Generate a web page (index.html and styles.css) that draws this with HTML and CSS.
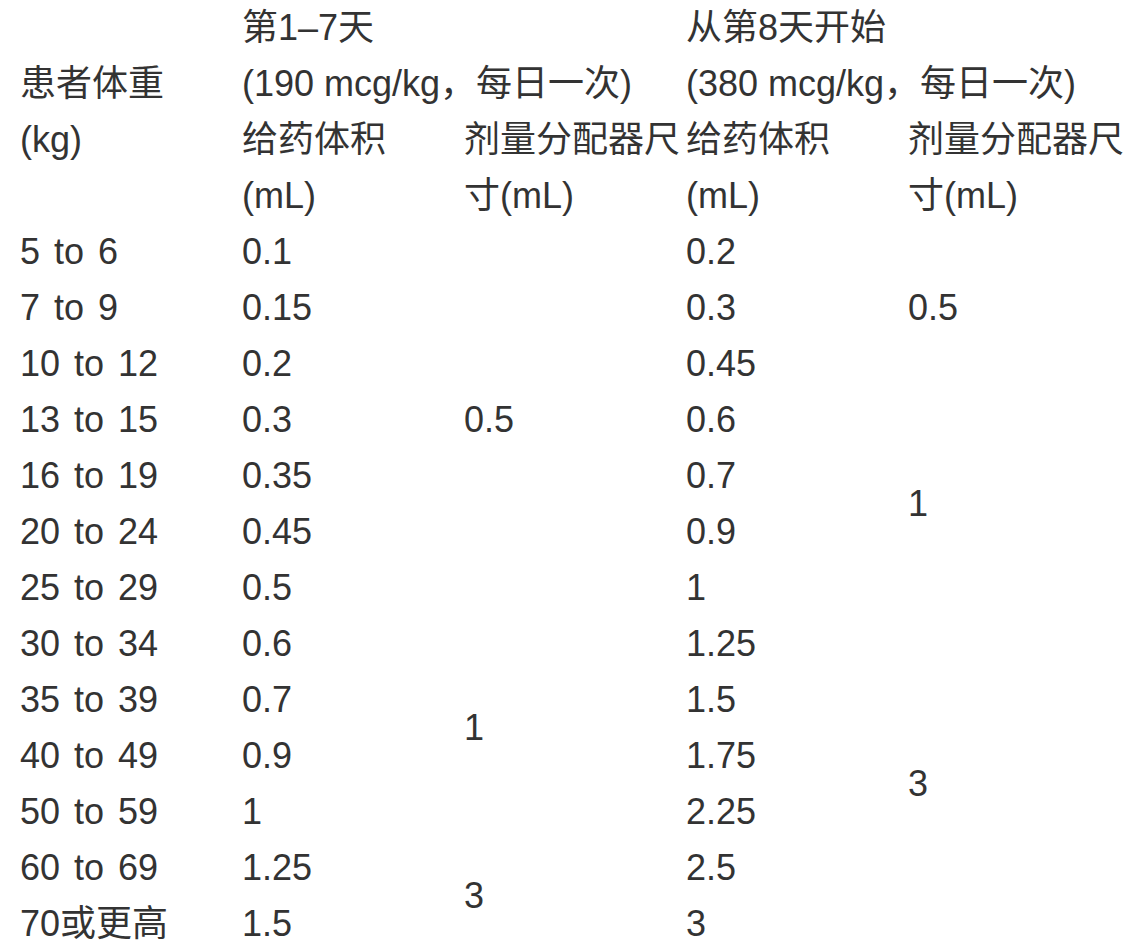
FILE: index.html
```html
<!DOCTYPE html>
<html lang="zh-CN">
<head>
<meta charset="utf-8">
<title>剂量表</title>
<link rel="stylesheet" href="styles.css">
</head>
<body>
<table class="dose-table">
  <colgroup>
    <col class="col"><col class="col"><col class="col"><col class="col"><col class="col">
  </colgroup>
  <thead>
    <tr>
      <th rowspan="2">患者体重<br>(kg)</th>
      <th colspan="2">第1–7天<br>(190 mcg/kg，每日一次)</th>
      <th colspan="2">从第8天开始<br>(380 mcg/kg，每日一次)</th>
    </tr>
    <tr>
      <th>给药体积<br>(mL)</th>
      <th>剂量分配器尺寸(mL)</th>
      <th>给药体积<br>(mL)</th>
      <th>剂量分配器尺寸(mL)</th>
    </tr>
  </thead>
  <tbody>
    <tr><td>5 to 6</td><td>0.1</td><td rowspan="7">0.5</td><td>0.2</td><td rowspan="3">0.5</td></tr>
    <tr><td>7 to 9</td><td>0.15</td><td>0.3</td></tr>
    <tr><td>10 to 12</td><td>0.2</td><td>0.45</td></tr>
    <tr><td>13 to 15</td><td>0.3</td><td>0.6</td><td rowspan="4">1</td></tr>
    <tr><td>16 to 19</td><td>0.35</td><td>0.7</td></tr>
    <tr><td>20 to 24</td><td>0.45</td><td>0.9</td></tr>
    <tr><td>25 to 29</td><td>0.5</td><td>1</td></tr>
    <tr><td>30 to 34</td><td>0.6</td><td rowspan="4">1</td><td>1.25</td><td rowspan="6">3</td></tr>
    <tr><td>35 to 39</td><td>0.7</td><td>1.5</td></tr>
    <tr><td>40 to 49</td><td>0.9</td><td>1.75</td></tr>
    <tr><td>50 to 59</td><td>1</td><td>2.25</td></tr>
    <tr><td>60 to 69</td><td>1.25</td><td rowspan="2">3</td><td>2.5</td></tr>
    <tr><td>70或更高</td><td>1.5</td><td>3</td></tr>
  </tbody>
</table>
</body>
</html>
```
FILE: styles.css
```css
html, body {
  margin: 0;
  padding: 0;
  background: #ffffff;
}
body {
  font-family: "Liberation Sans", "Noto Sans CJK SC", sans-serif;
  font-size: 36px;
  line-height: 56px;
  color: #333333;
}
.dose-table {
  margin-left: 20px;
  border-collapse: collapse;
  border-spacing: 0;
  table-layout: fixed;
  width: 1110px;
}
.dose-table .col {
  width: 222px;
}
.dose-table th,
.dose-table td {
  padding: 0;
  text-align: left;
  vertical-align: middle;
  font-weight: normal;
}
.dose-table tbody td {
  word-spacing: 4px;
}
```
